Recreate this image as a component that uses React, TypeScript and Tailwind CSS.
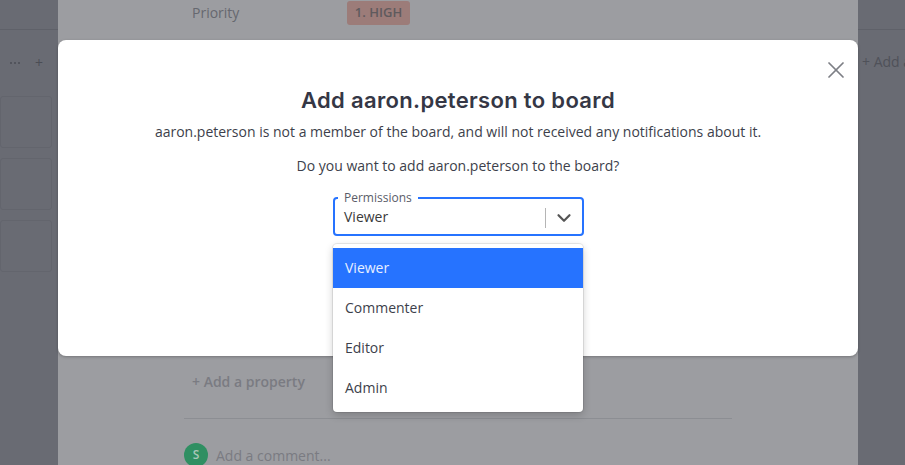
import { ChevronDown, X } from "lucide-react";

const options = ["Viewer", "Commenter", "Editor", "Admin"];

function BoardColumn() {
  return (
    <div className="w-[58px] shrink-0 bg-[#696b73]">
      <div className="h-[30px] border-b border-[#5f6169]" />
      <div className="flex h-[66px] items-center justify-end gap-[15px] pr-[15px] text-[#4b4d55]">
        <div className="flex gap-[2px]">
          <span className="h-[2px] w-[2px] rounded-full bg-[#4b4d55]" />
          <span className="h-[2px] w-[2px] rounded-full bg-[#4b4d55]" />
          <span className="h-[2px] w-[2px] rounded-full bg-[#4b4d55]" />
        </div>
        <span className="text-[14px] leading-none">+</span>
      </div>
      <div className="flex flex-col gap-[10px]">
        <div className="h-[52px] w-[52px] rounded-[3px] border border-[#63656d]" />
        <div className="h-[52px] w-[52px] rounded-[3px] border border-[#63656d]" />
        <div className="h-[52px] w-[52px] rounded-[3px] border border-[#63656d]" />
      </div>
    </div>
  );
}

function CardBehind() {
  return (
    <div className="relative w-[800px] shrink-0 bg-[#9c9da1] text-[14px] text-[#66686f]">
      <div className="flex h-[26px] items-center pl-[134px]">
        <span className="w-[155px] -translate-y-px font-medium">Priority</span>
        <span className="flex h-[24px] w-[63px] items-center justify-center rounded-[3px] bg-[#9c7c79] text-[13px] font-semibold text-[#5f5a5d]">
          1. HIGH
        </span>
      </div>
      <div className="mt-[345px] pl-[134px] font-semibold text-[#7a7b82]">+ Add a property</div>
      <div className="mx-[126px] mt-[26px] h-px bg-[#8c8e93]" />
      <div className="mt-[24px] flex items-center gap-[8px] pl-[126px]">
        <div className="flex h-[24px] w-[24px] items-center justify-center rounded-full bg-[#2f8f62] text-[12px] font-semibold text-[#a9c6b8]">
          S
        </div>
        <span className="text-[#7a7b82]">Add a comment...</span>
      </div>
    </div>
  );
}

export default function App() {
  return (
    <div className="relative flex h-[465px] w-[905px] overflow-hidden font-['Open_Sans',sans-serif]">
      <BoardColumn />
      <CardBehind />
      <div className="flex-1 bg-[#696b73]">
        <div className="h-[30px] border-b border-[#5f6169]" />
        <div className="pl-[4px] pt-[21px] text-[14px] text-[#4f5159] whitespace-nowrap">+ Add a</div>
      </div>

      {/* modal */}
      <div className="absolute left-[58px] top-[40px] flex h-[316px] w-[800px] flex-col items-center rounded-[8px] bg-white pt-[46px] text-[#3d3f4b] shadow-[0_1px_3px_rgba(0,0,0,0.25)]">
        <button className="absolute right-[8px] top-[16px] text-[#7d7f85]">
          <X size={28} strokeWidth={1.5} />
        </button>
        <h1 className="font-['Inter',sans-serif] text-[22px] font-semibold leading-[28px] tracking-[0.33px] text-[#353745]">
          Add aaron.peterson to board
        </h1>
        <p className="mt-[8px] text-[14px] leading-[20px]">
          aaron.peterson is not a member of the board, and will not received any notifications about it.
        </p>
        <p className="mt-[14px] text-[14px] leading-[20px]">Do you want to add aaron.peterson to the board?</p>

        <div className="relative ml-px mt-[21px] h-[39px] w-[251px] rounded-[4px] border-2 border-[#2673ff]">
          <span className="absolute -top-[9px] left-[3px] bg-white px-[6px] text-[12px] leading-[16px] text-[#5a5c68]">
            Permissions
          </span>
          <div className="flex h-full items-center pl-[9px] pt-[2px] text-[14px] text-[#3a3a3a]">
            <span className="flex-1 -translate-y-px">Viewer</span>
            <span className="h-[20px] w-px bg-[#b5b5b5]" />
            <ChevronDown size={22} strokeWidth={2.4} className="mx-[7px] text-[#555]" />
          </div>

          {/* open menu */}
          <ul className="absolute -left-[2px] top-[45px] z-10 w-[250px] rounded-[4px] bg-white py-[4px] text-[14px] shadow-[0_0_0_1px_rgba(0,0,0,0.08),0_3px_8px_rgba(0,0,0,0.2)]">
            {options.map((o, i) => (
              <li
                key={o}
                className={i === 0 ? "flex h-[40px] items-center bg-[#2673ff] pb-[2px] pl-[12px] text-[#e8f0ff]" : "flex h-[40px] items-center pb-[2px] pl-[12px]"}
              >
                {o}
              </li>
            ))}
          </ul>
        </div>
      </div>
    </div>
  );
}
